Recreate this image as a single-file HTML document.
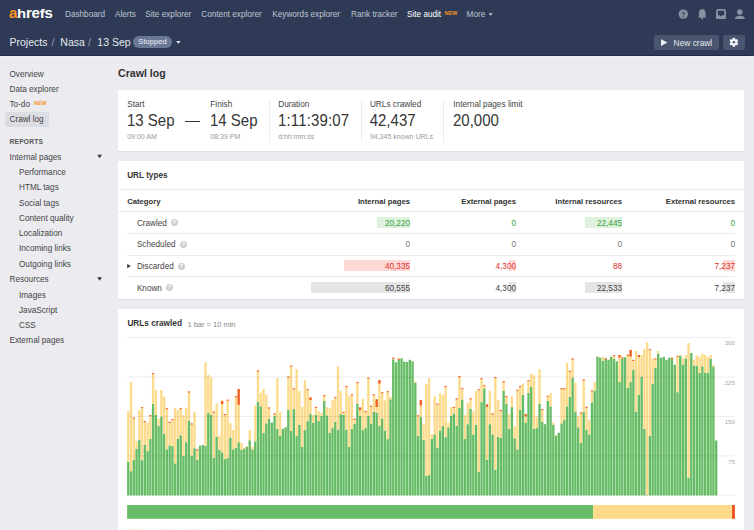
<!DOCTYPE html>
<html><head><meta charset="utf-8">
<style>
*{box-sizing:border-box;margin:0;padding:0}
html,body{width:754px;height:530px;overflow:hidden}
body{background:#ebebf0;font-family:"Liberation Sans",sans-serif;color:#333;position:relative}
.a{position:absolute;white-space:nowrap}
#hdr{position:absolute;left:0;top:0;width:754px;height:56px;background:#2f3b56;border-bottom:1px solid #222c45;box-shadow:0 1px 0 #f1f1f5}
.nav{color:#bfc5d1;font-size:8.2px;top:10px;line-height:10px}
.logo{left:9px;top:4.7px;font-size:15px;font-weight:bold;color:#fff;letter-spacing:-0.25px;line-height:16px}
.logo b{color:#f7941d}
.logo i{font-style:normal;display:inline-block;transform:scaleY(0.9);transform-origin:50% 13px}
.crumb{color:#e6e8ee;font-size:10.5px;top:36px;line-height:12px}
.pill{left:133px;top:36px;width:39px;height:12px;border-radius:6px;background:#6a7896;color:#eef0f5;font-size:7.6px;line-height:12px;text-align:center}
.btn{top:35px;height:15px;background:#4a566f;border-radius:2px}
.side{font-size:8.2px;color:#444;line-height:10px}
.sub{left:19px}
.title{left:118px;top:66.8px;font-size:10.6px;font-weight:bold;color:#333;line-height:12px}
.card{position:absolute;left:118px;width:626px;background:#fff;box-shadow:0 1px 0 #dedee5}
.lbl{font-size:8.25px;color:#444;line-height:10px}
.big{font-size:15px;color:#363636;line-height:16px;transform:scaleY(1.08);transform-origin:0 12.8px}
.sm{font-size:7px;color:#999;line-height:8px}
.vd{position:absolute;width:1px;background:#ececf0;top:10px;height:42px}
.hl{position:absolute;height:1px;background:#ececf0}
.th{font-size:7.7px;font-weight:bold;color:#333;line-height:10px}
.td{font-size:8.2px;color:#444;line-height:10px}
.num{font-size:8.2px;line-height:11px;text-align:right}
.q{position:absolute;width:7px;height:7px;border-radius:50%;background:#cfcfcf;color:#fff;font-size:5.5px;line-height:7px;text-align:center;font-weight:bold}
.g{color:#3aa142}.r{color:#e5322d}.k{color:#777}.d{color:#444}
.bar{position:absolute;height:11px}
</style></head><body>
<div id="hdr">
  <div class="a logo"><b>a</b><i>h</i>re<i>f</i>s</div>
  <div class="a nav" style="left:65px">Dashboard</div>
  <div class="a nav" style="left:115px">Alerts</div>
  <div class="a nav" style="left:145.3px">Site explorer</div>
  <div class="a nav" style="left:201.3px">Content explorer</div>
  <div class="a nav" style="left:272.3px">Keywords explorer</div>
  <div class="a nav" style="left:351px">Rank tracker</div>
  <div class="a nav" style="left:407px;color:#fff">Site audit</div>
  <div class="a" style="left:444.8px;top:9.8px;font-size:5.4px;font-weight:bold;color:#f7931e;line-height:6px">NEW</div>
  <div class="a nav" style="left:466.6px">More</div>
  

  <div class="a crumb" style="left:9.5px">Projects</div>
  <div class="a crumb" style="left:51.5px;color:#9aa2b5">/</div>
  <div class="a crumb" style="left:60.3px">Nasa</div>
  <div class="a crumb" style="left:88px;color:#9aa2b5">/</div>
  <div class="a crumb" style="left:97.3px">13 Sep</div>
  <div class="a pill">Stopped</div>
  

  <div class="a btn" style="left:654px;width:65px"></div>
  <div class="a" style="left:673.6px;top:37.5px;font-size:8.4px;color:#e8eaf0;line-height:10px">New crawl</div>
  <div class="a btn" style="left:723.1px;width:21.5px"></div>
  <svg class="a" style="left:0;top:0" width="754" height="56" viewBox="0 0 754 56">
    <path d="M661 39.2 L667.4 42.6 L661 46 Z" fill="#eef0f4"/>
    <g transform="translate(733.9 42.3)" fill="#f4f5f8">
      <circle r="3.2"/>
      <rect x="-1.25" y="-4.4" width="2.5" height="2.4"/>
      <rect x="-1.25" y="-4.4" width="2.5" height="2.4" transform="rotate(60)"/>
      <rect x="-1.25" y="-4.4" width="2.5" height="2.4" transform="rotate(120)"/>
      <rect x="-1.25" y="-4.4" width="2.5" height="2.4" transform="rotate(180)"/>
      <rect x="-1.25" y="-4.4" width="2.5" height="2.4" transform="rotate(240)"/>
      <rect x="-1.25" y="-4.4" width="2.5" height="2.4" transform="rotate(300)"/>
      <circle r="1.25" fill="#4a566f"/>
    </g>
    <circle cx="683.3" cy="14.1" r="4.7" fill="#8a91a3"/>
    <text x="683.3" y="16.9" font-family="Liberation Sans" font-weight="bold" font-size="7.2" text-anchor="middle" fill="#2e3a55">?</text>
    <path d="M702.2 9.1 C699.7 9.4 698.9 11.4 698.9 13.5 L698.9 16.4 L697.7 17.6 L706.8 17.6 L705.6 16.4 L705.6 13.5 C705.6 11.4 704.8 9.4 702.2 9.1 Z" fill="#8a91a3"/>
    <circle cx="702.2" cy="18.2" r="1.1" fill="#8a91a3"/>
    <rect x="717" y="9.9" width="8.1" height="8.2" rx="1.2" fill="none" stroke="#8a91a3" stroke-width="1.8"/>
    <path d="M716.2 15.2 L719.5 15.2 L720.9 16.5 L721.9 15.2 L725.9 15.2 L725.9 18.9 L716.2 18.9 Z" fill="#8a91a3"/>
    <circle cx="739.8" cy="12" r="2.8" fill="#8a91a3"/>
    <path d="M735 18.9 C735 16.8 737 15.8 739.9 15.8 C742.8 15.8 744.8 16.8 744.8 18.9 Z" fill="#8a91a3"/>
    <path d="M176.2 41 L180.6 41 L178.4 43.8 Z" fill="#e6e8ee"/><path d="M488.5 13.2 L492.9 13.2 L490.7 15.8 Z" fill="#b9bfcc"/>
  </svg>
</div>

<!-- sidebar -->
<div class="a side" style="left:5px;top:112.2px;width:43.6px;height:14.5px;background:#dcdce3;border-radius:2px"></div>
<div class="a side" style="left:9.5px;top:69.7px">Overview</div>
<div class="a side" style="left:9.5px;top:84.7px">Data explorer</div>
<div class="a side" style="left:9.5px;top:99.7px">To-do</div>
<div class="a" style="left:34px;top:99.8px;font-size:5.4px;font-weight:bold;color:#f7931e;line-height:6px">NEW</div>
<div class="a side" style="left:9.5px;top:114.7px">Crawl log</div>
<div class="a" style="left:9.5px;top:137.5px;font-size:6.6px;font-weight:bold;color:#555;letter-spacing:0.25px;line-height:8px">REPORTS</div>
<div class="a side" style="left:9.5px;top:152.7px">Internal pages</div>
<svg class="a" style="left:0;top:0" width="120" height="300"><path d="M97.3 154.8 L101.9 154.8 L99.6 158.2 Z" fill="#333"/><path d="M97.3 277.3 L101.9 277.3 L99.6 280.7 Z" fill="#333"/></svg>
<div class="a side sub" style="top:168.2px">Performance</div>
<div class="a side sub" style="top:183.2px">HTML tags</div>
<div class="a side sub" style="top:198.7px">Social tags</div>
<div class="a side sub" style="top:214.1px">Content quality</div>
<div class="a side sub" style="top:229.2px">Localization</div>
<div class="a side sub" style="top:244.3px">Incoming links</div>
<div class="a side sub" style="top:259.8px">Outgoing links</div>
<div class="a side" style="left:9.5px;top:275.1px">Resources</div>

<div class="a side sub" style="top:290.6px">Images</div>
<div class="a side sub" style="top:305.7px">JavaScript</div>
<div class="a side sub" style="top:320.8px">CSS</div>
<div class="a side" style="left:9.5px;top:336.3px">External pages</div>

<div class="a title">Crawl log</div>

<!-- stats card -->
<div class="card" style="top:90px;height:61px">
  <div class="a lbl" style="left:9.2px;top:9.5px">Start</div>
  <div class="a big" style="left:9px;top:22.5px">13 Sep</div>
  <div class="a sm" style="left:9.2px;top:42.8px">09:00 AM</div>
  <div class="a" style="left:67px;top:30.5px;width:15px;height:1.2px;background:#333"></div>
  <div class="a lbl" style="left:92.3px;top:9.5px">Finish</div>
  <div class="a big" style="left:92px;top:22.5px">14 Sep</div>
  <div class="a sm" style="left:92.3px;top:42.8px">08:39 PM</div>
  <div class="vd" style="left:150.5px"></div>
  <div class="a lbl" style="left:160.2px;top:9.5px">Duration</div>
  <div class="a big" style="left:160px;top:22.5px;letter-spacing:0.15px">1:11:39:07</div>
  <div class="a sm" style="left:160.2px;top:42.8px">d:hh:mm:ss</div>
  <div class="vd" style="left:242.5px"></div>
  <div class="a lbl" style="left:251.9px;top:9.5px">URLs crawled</div>
  <div class="a big" style="left:251.7px;top:22.5px">42,437</div>
  <div class="a sm" style="left:251.9px;top:42.8px">94,345 known URLs</div>
  <div class="vd" style="left:325.2px"></div>
  <div class="a lbl" style="left:335.3px;top:9.5px">Internal pages limit</div>
  <div class="a big" style="left:335px;top:22.5px">20,000</div>
</div>

<!-- URL types card -->
<div class="card" style="top:161px;height:137.5px">
  <div class="a" style="left:9.2px;top:9.5px;font-size:8.2px;font-weight:bold;color:#333;line-height:10px">URL types</div>
  <div class="hl" style="left:0;width:626px;top:28.4px"></div>
  <div class="a th" style="left:9.2px;top:35.6px">Category</div>
  <div class="a th" style="right:334px;top:35.6px">Internal pages</div>
  <div class="a th" style="right:228px;top:35.6px">External pages</div>
  <div class="a th" style="right:122px;top:35.6px">Internal resources</div>
  <div class="a th" style="right:9px;top:35.6px">External resources</div>
  <div class="hl" style="left:0;width:626px;top:50.3px"></div>
  <div class="hl" style="left:9.2px;width:608px;top:71.8px"></div>
  <div class="hl" style="left:9.2px;width:608px;top:94.2px"></div>
  <div class="hl" style="left:9.2px;width:608px;top:115.3px"></div>

  <!-- rows -->
  <div class="a td" style="left:18.9px;top:57.5px">Crawled</div>
  <div class="q" style="left:52.9px;top:58px">?</div>
  <div class="a td" style="left:18.9px;top:79px">Scheduled</div>
  <div class="q" style="left:61.9px;top:79.5px">?</div>
  <svg class="a" style="left:0;top:0" width="30" height="120"><path d="M9.2 103 L12.8 105.1 L9.2 107.2 Z" fill="#333"/></svg>
  <div class="a td" style="left:18.9px;top:101px">Discarded</div>
  <div class="q" style="left:59.7px;top:101.5px">?</div>
  <div class="a td" style="left:18.9px;top:122.6px">Known</div>
  <div class="q" style="left:48px;top:123px">?</div>

  <!-- bars col1 right=292 -->
  <div class="bar" style="left:259px;width:33px;top:55.9px;background:#dff2dd"></div>
  <div class="bar" style="left:226px;width:66px;top:99.3px;background:#fdd8d4"></div>
  <div class="bar" style="left:193px;width:99px;top:121px;background:#e4e4e4"></div>
  <div class="bar" style="left:391px;width:7px;top:99.3px;background:#fdd8d4"></div>
  <div class="bar" style="left:391px;width:7px;top:121px;background:#e4e4e4"></div>
  <div class="bar" style="left:467.3px;width:36.7px;top:55.9px;background:#dff2dd"></div>
  <div class="bar" style="left:467.3px;width:36.7px;top:121px;background:#e4e4e4"></div>
  <div class="bar" style="left:605.2px;width:11.8px;top:99.3px;background:#fdd8d4"></div>
  <div class="bar" style="left:605.2px;width:11.8px;top:121px;background:#e4e4e4"></div>

  <div class="a num g" style="right:334px;top:56.5px">20,220</div>
  <div class="a num g" style="right:228px;top:56.5px">0</div>
  <div class="a num g" style="right:122px;top:56.5px">22,445</div>
  <div class="a num g" style="right:9px;top:56.5px">0</div>
  <div class="a num k" style="right:334px;top:78px">0</div>
  <div class="a num k" style="right:228px;top:78px">0</div>
  <div class="a num k" style="right:122px;top:78px">0</div>
  <div class="a num k" style="right:9px;top:78px">0</div>
  <div class="a num r" style="right:334px;top:100px">40,335</div>
  <div class="a num r" style="right:228px;top:100px">4,300</div>
  <div class="a num r" style="right:122px;top:100px">88</div>
  <div class="a num r" style="right:9px;top:100px">7,237</div>
  <div class="a num d" style="right:334px;top:121.6px">60,555</div>
  <div class="a num d" style="right:228px;top:121.6px">4,300</div>
  <div class="a num d" style="right:122px;top:121.6px">22,533</div>
  <div class="a num d" style="right:9px;top:121.6px">7,237</div>
</div>

<!-- chart card -->
<div class="card" style="top:308.6px;height:240px">
  <div class="a" style="left:9.4px;top:10.9px;font-size:8.25px;font-weight:bold;color:#333;line-height:10px">URLs crawled</div>
  <div class="a" style="left:69.4px;top:11px;font-size:7.5px;color:#888;line-height:10px">1 bar = 10 min</div>
  </div>
<!--CHART--><svg class="a" style="left:0;top:0" width="754" height="530" viewBox="0 0 754 530"><rect x="127.10" y="461.8" width="2.35" height="33.6" fill="#66bc64"/><rect x="127.10" y="411.0" width="2.35" height="50.8" fill="#fddb8c"/><rect x="129.86" y="471.2" width="2.35" height="24.2" fill="#66bc64"/><rect x="129.86" y="382.0" width="2.35" height="89.2" fill="#fddb8c"/><rect x="132.62" y="459.9" width="2.35" height="35.5" fill="#66bc64"/><rect x="132.62" y="417.5" width="2.35" height="42.4" fill="#fddb8c"/><rect x="132.62" y="417.5" width="2.35" height="1.2" fill="#f3734a"/><rect x="135.38" y="448.8" width="2.35" height="46.6" fill="#66bc64"/><rect x="135.38" y="441.0" width="2.35" height="7.8" fill="#fddb8c"/><rect x="138.14" y="439.9" width="2.35" height="55.5" fill="#66bc64"/><rect x="138.14" y="410.0" width="2.35" height="29.9" fill="#fddb8c"/><rect x="140.90" y="460.2" width="2.35" height="35.2" fill="#66bc64"/><rect x="140.90" y="407.0" width="2.35" height="53.2" fill="#fddb8c"/><rect x="140.90" y="407.0" width="2.35" height="1.2" fill="#f3734a"/><rect x="143.66" y="445.0" width="2.35" height="50.4" fill="#66bc64"/><rect x="143.66" y="421.0" width="2.35" height="24.0" fill="#fddb8c"/><rect x="143.66" y="421.0" width="2.35" height="1.2" fill="#f3734a"/><rect x="146.42" y="451.1" width="2.35" height="44.3" fill="#66bc64"/><rect x="146.42" y="422.6" width="2.35" height="28.5" fill="#fddb8c"/><rect x="149.18" y="439.0" width="2.35" height="56.4" fill="#66bc64"/><rect x="149.18" y="415.0" width="2.35" height="24.0" fill="#fddb8c"/><rect x="149.18" y="415.0" width="2.35" height="1.2" fill="#f3734a"/><rect x="151.94" y="404.0" width="2.35" height="91.4" fill="#66bc64"/><rect x="151.94" y="373.0" width="2.35" height="31.0" fill="#fddb8c"/><rect x="151.94" y="373.0" width="2.35" height="1.2" fill="#f3734a"/><rect x="154.70" y="415.0" width="2.35" height="80.4" fill="#66bc64"/><rect x="154.70" y="390.0" width="2.35" height="25.0" fill="#fddb8c"/><rect x="157.46" y="425.8" width="2.35" height="69.6" fill="#66bc64"/><rect x="157.46" y="418.7" width="2.35" height="7.1" fill="#fddb8c"/><rect x="160.22" y="416.4" width="2.35" height="79.0" fill="#66bc64"/><rect x="160.22" y="390.0" width="2.35" height="26.4" fill="#fddb8c"/><rect x="162.98" y="433.6" width="2.35" height="61.8" fill="#66bc64"/><rect x="162.98" y="396.6" width="2.35" height="37.0" fill="#fddb8c"/><rect x="165.74" y="449.3" width="2.35" height="46.1" fill="#66bc64"/><rect x="165.74" y="408.0" width="2.35" height="41.3" fill="#fddb8c"/><rect x="165.74" y="408.0" width="2.35" height="1.2" fill="#f3734a"/><rect x="168.50" y="445.3" width="2.35" height="50.1" fill="#66bc64"/><rect x="168.50" y="421.8" width="2.35" height="23.5" fill="#fddb8c"/><rect x="168.50" y="421.8" width="2.35" height="1.2" fill="#f3734a"/><rect x="171.26" y="446.1" width="2.35" height="49.3" fill="#66bc64"/><rect x="171.26" y="419.0" width="2.35" height="27.1" fill="#fddb8c"/><rect x="171.26" y="419.0" width="2.35" height="1.2" fill="#f3734a"/><rect x="174.02" y="463.4" width="2.35" height="32.0" fill="#66bc64"/><rect x="174.02" y="408.0" width="2.35" height="55.4" fill="#fddb8c"/><rect x="176.78" y="439.0" width="2.35" height="56.4" fill="#66bc64"/><rect x="176.78" y="410.0" width="2.35" height="29.0" fill="#fddb8c"/><rect x="179.54" y="435.2" width="2.35" height="60.2" fill="#66bc64"/><rect x="179.54" y="408.0" width="2.35" height="27.2" fill="#fddb8c"/><rect x="179.54" y="408.0" width="2.35" height="1.2" fill="#f3734a"/><rect x="182.30" y="456.0" width="2.35" height="39.4" fill="#66bc64"/><rect x="182.30" y="415.0" width="2.35" height="41.0" fill="#fddb8c"/><rect x="185.06" y="442.2" width="2.35" height="53.2" fill="#66bc64"/><rect x="185.06" y="408.0" width="2.35" height="34.2" fill="#fddb8c"/><rect x="187.82" y="421.0" width="2.35" height="74.4" fill="#66bc64"/><rect x="187.82" y="391.4" width="2.35" height="29.6" fill="#fddb8c"/><rect x="187.82" y="391.4" width="2.35" height="1.2" fill="#f3734a"/><rect x="190.58" y="455.5" width="2.35" height="39.9" fill="#66bc64"/><rect x="190.58" y="423.4" width="2.35" height="32.1" fill="#fddb8c"/><rect x="190.58" y="423.4" width="2.35" height="1.2" fill="#f3734a"/><rect x="193.34" y="448.2" width="2.35" height="47.2" fill="#66bc64"/><rect x="193.34" y="411.8" width="2.35" height="36.4" fill="#fddb8c"/><rect x="196.10" y="459.9" width="2.35" height="35.5" fill="#66bc64"/><rect x="196.10" y="449.3" width="2.35" height="10.6" fill="#fddb8c"/><rect x="196.10" y="449.3" width="2.35" height="1.2" fill="#f3734a"/><rect x="198.86" y="445.7" width="2.35" height="49.7" fill="#66bc64"/><rect x="201.62" y="445.0" width="2.35" height="50.4" fill="#66bc64"/><rect x="204.38" y="446.0" width="2.35" height="49.4" fill="#66bc64"/><rect x="204.38" y="362.4" width="2.35" height="83.6" fill="#fddb8c"/><rect x="207.14" y="413.0" width="2.35" height="82.4" fill="#66bc64"/><rect x="207.14" y="375.0" width="2.35" height="38.0" fill="#fddb8c"/><rect x="209.90" y="415.0" width="2.35" height="80.4" fill="#66bc64"/><rect x="209.90" y="377.0" width="2.35" height="38.0" fill="#fddb8c"/><rect x="212.66" y="457.9" width="2.35" height="37.5" fill="#66bc64"/><rect x="212.66" y="411.5" width="2.35" height="46.4" fill="#fddb8c"/><rect x="212.66" y="411.5" width="2.35" height="1.2" fill="#f3734a"/><rect x="215.42" y="436.7" width="2.35" height="58.7" fill="#66bc64"/><rect x="215.42" y="403.6" width="2.35" height="33.1" fill="#fddb8c"/><rect x="218.18" y="449.7" width="2.35" height="45.7" fill="#66bc64"/><rect x="218.18" y="435.6" width="2.35" height="14.1" fill="#fddb8c"/><rect x="220.94" y="452.4" width="2.35" height="43.0" fill="#66bc64"/><rect x="220.94" y="400.8" width="2.35" height="51.6" fill="#fddb8c"/><rect x="220.94" y="400.8" width="2.35" height="3.2" fill="#f0602e"/><rect x="223.70" y="459.1" width="2.35" height="36.3" fill="#66bc64"/><rect x="223.70" y="414.0" width="2.35" height="45.1" fill="#fddb8c"/><rect x="223.70" y="414.0" width="2.35" height="1.2" fill="#f3734a"/><rect x="226.46" y="457.9" width="2.35" height="37.5" fill="#66bc64"/><rect x="226.46" y="399.6" width="2.35" height="58.3" fill="#fddb8c"/><rect x="226.46" y="399.6" width="2.35" height="1.2" fill="#f3734a"/><rect x="229.22" y="437.5" width="2.35" height="57.9" fill="#66bc64"/><rect x="229.22" y="423.1" width="2.35" height="14.4" fill="#fddb8c"/><rect x="231.98" y="449.3" width="2.35" height="46.1" fill="#66bc64"/><rect x="231.98" y="430.0" width="2.35" height="19.3" fill="#fddb8c"/><rect x="234.74" y="447.7" width="2.35" height="47.7" fill="#66bc64"/><rect x="234.74" y="396.1" width="2.35" height="51.6" fill="#fddb8c"/><rect x="234.74" y="396.1" width="2.35" height="1.2" fill="#f3734a"/><rect x="237.50" y="442.2" width="2.35" height="53.2" fill="#66bc64"/><rect x="237.50" y="389.0" width="2.35" height="53.2" fill="#fddb8c"/><rect x="237.50" y="389.0" width="2.35" height="15.7" fill="#f0602e"/><rect x="240.26" y="450.0" width="2.35" height="45.4" fill="#66bc64"/><rect x="240.26" y="443.0" width="2.35" height="7.0" fill="#fddb8c"/><rect x="243.02" y="448.5" width="2.35" height="46.9" fill="#66bc64"/><rect x="243.02" y="447.7" width="2.35" height="0.8" fill="#fddb8c"/><rect x="245.78" y="446.9" width="2.35" height="48.5" fill="#66bc64"/><rect x="245.78" y="446.1" width="2.35" height="0.8" fill="#fddb8c"/><rect x="248.54" y="440.3" width="2.35" height="55.1" fill="#66bc64"/><rect x="248.54" y="430.0" width="2.35" height="10.3" fill="#fddb8c"/><rect x="251.30" y="449.3" width="2.35" height="46.1" fill="#66bc64"/><rect x="251.30" y="446.9" width="2.35" height="2.4" fill="#fddb8c"/><rect x="254.06" y="441.4" width="2.35" height="54.0" fill="#66bc64"/><rect x="254.06" y="405.5" width="2.35" height="35.9" fill="#fddb8c"/><rect x="256.82" y="402.0" width="2.35" height="93.4" fill="#66bc64"/><rect x="256.82" y="370.3" width="2.35" height="31.7" fill="#fddb8c"/><rect x="256.82" y="370.3" width="2.35" height="1.2" fill="#f3734a"/><rect x="259.58" y="406.3" width="2.35" height="89.1" fill="#66bc64"/><rect x="259.58" y="392.7" width="2.35" height="13.6" fill="#fddb8c"/><rect x="262.34" y="432.8" width="2.35" height="62.6" fill="#66bc64"/><rect x="262.34" y="389.0" width="2.35" height="43.8" fill="#fddb8c"/><rect x="265.10" y="423.4" width="2.35" height="72.0" fill="#66bc64"/><rect x="265.10" y="394.6" width="2.35" height="28.8" fill="#fddb8c"/><rect x="267.86" y="419.0" width="2.35" height="76.4" fill="#66bc64"/><rect x="267.86" y="407.4" width="2.35" height="11.6" fill="#fddb8c"/><rect x="267.86" y="407.4" width="2.35" height="1.2" fill="#f3734a"/><rect x="270.62" y="422.6" width="2.35" height="72.8" fill="#66bc64"/><rect x="273.38" y="415.9" width="2.35" height="79.5" fill="#66bc64"/><rect x="273.38" y="413.4" width="2.35" height="2.5" fill="#fddb8c"/><rect x="273.38" y="413.4" width="2.35" height="1.2" fill="#f3734a"/><rect x="276.14" y="428.9" width="2.35" height="66.5" fill="#66bc64"/><rect x="276.14" y="378.1" width="2.35" height="50.8" fill="#fddb8c"/><rect x="278.90" y="435.6" width="2.35" height="59.8" fill="#66bc64"/><rect x="278.90" y="411.8" width="2.35" height="23.8" fill="#fddb8c"/><rect x="281.66" y="428.9" width="2.35" height="66.5" fill="#66bc64"/><rect x="284.42" y="427.3" width="2.35" height="68.1" fill="#66bc64"/><rect x="287.18" y="409.9" width="2.35" height="85.5" fill="#66bc64"/><rect x="287.18" y="376.5" width="2.35" height="33.4" fill="#fddb8c"/><rect x="287.18" y="376.5" width="2.35" height="1.2" fill="#f3734a"/><rect x="289.94" y="430.9" width="2.35" height="64.5" fill="#66bc64"/><rect x="289.94" y="365.6" width="2.35" height="65.3" fill="#fddb8c"/><rect x="289.94" y="365.6" width="2.35" height="1.2" fill="#f3734a"/><rect x="292.70" y="409.1" width="2.35" height="86.3" fill="#66bc64"/><rect x="292.70" y="388.3" width="2.35" height="20.8" fill="#fddb8c"/><rect x="292.70" y="388.3" width="2.35" height="1.2" fill="#f3734a"/><rect x="295.46" y="435.9" width="2.35" height="59.5" fill="#66bc64"/><rect x="295.46" y="369.2" width="2.35" height="66.7" fill="#fddb8c"/><rect x="298.22" y="425.0" width="2.35" height="70.4" fill="#66bc64"/><rect x="298.22" y="391.1" width="2.35" height="33.9" fill="#fddb8c"/><rect x="300.98" y="446.9" width="2.35" height="48.5" fill="#66bc64"/><rect x="300.98" y="407.1" width="2.35" height="39.8" fill="#fddb8c"/><rect x="303.74" y="430.1" width="2.35" height="65.3" fill="#66bc64"/><rect x="303.74" y="380.1" width="2.35" height="50.0" fill="#fddb8c"/><rect x="306.50" y="421.1" width="2.35" height="74.3" fill="#66bc64"/><rect x="306.50" y="389.1" width="2.35" height="32.0" fill="#fddb8c"/><rect x="306.50" y="389.1" width="2.35" height="1.2" fill="#f3734a"/><rect x="309.26" y="414.1" width="2.35" height="81.3" fill="#66bc64"/><rect x="309.26" y="397.4" width="2.35" height="16.7" fill="#fddb8c"/><rect x="309.26" y="397.4" width="2.35" height="2.6" fill="#f0602e"/><rect x="312.02" y="422.9" width="2.35" height="72.5" fill="#66bc64"/><rect x="312.02" y="414.9" width="2.35" height="8.0" fill="#fddb8c"/><rect x="314.78" y="414.8" width="2.35" height="80.6" fill="#66bc64"/><rect x="314.78" y="406.8" width="2.35" height="8.0" fill="#fddb8c"/><rect x="314.78" y="406.8" width="2.35" height="1.2" fill="#f3734a"/><rect x="317.54" y="421.1" width="2.35" height="74.3" fill="#66bc64"/><rect x="317.54" y="411.3" width="2.35" height="9.8" fill="#fddb8c"/><rect x="320.30" y="415.9" width="2.35" height="79.5" fill="#66bc64"/><rect x="320.30" y="413.0" width="2.35" height="2.9" fill="#fddb8c"/><rect x="323.06" y="401.1" width="2.35" height="94.3" fill="#66bc64"/><rect x="323.06" y="395.0" width="2.35" height="6.1" fill="#fddb8c"/><rect x="323.06" y="395.0" width="2.35" height="1.2" fill="#f3734a"/><rect x="325.82" y="415.3" width="2.35" height="80.1" fill="#66bc64"/><rect x="325.82" y="407.1" width="2.35" height="8.2" fill="#fddb8c"/><rect x="328.58" y="432.8" width="2.35" height="62.6" fill="#66bc64"/><rect x="328.58" y="408.3" width="2.35" height="24.5" fill="#fddb8c"/><rect x="331.34" y="428.1" width="2.35" height="67.3" fill="#66bc64"/><rect x="331.34" y="400.0" width="2.35" height="28.1" fill="#fddb8c"/><rect x="334.10" y="421.8" width="2.35" height="73.6" fill="#66bc64"/><rect x="334.10" y="396.9" width="2.35" height="24.9" fill="#fddb8c"/><rect x="334.10" y="396.9" width="2.35" height="1.2" fill="#f3734a"/><rect x="336.86" y="429.7" width="2.35" height="65.7" fill="#66bc64"/><rect x="336.86" y="366.3" width="2.35" height="63.4" fill="#fddb8c"/><rect x="339.62" y="414.1" width="2.35" height="81.3" fill="#66bc64"/><rect x="339.62" y="391.1" width="2.35" height="23.0" fill="#fddb8c"/><rect x="342.38" y="414.6" width="2.35" height="80.8" fill="#66bc64"/><rect x="342.38" y="411.8" width="2.35" height="2.8" fill="#fddb8c"/><rect x="342.38" y="411.8" width="2.35" height="1.2" fill="#f3734a"/><rect x="345.14" y="429.7" width="2.35" height="65.7" fill="#66bc64"/><rect x="345.14" y="385.9" width="2.35" height="43.8" fill="#fddb8c"/><rect x="345.14" y="385.9" width="2.35" height="1.2" fill="#f3734a"/><rect x="347.90" y="446.9" width="2.35" height="48.5" fill="#66bc64"/><rect x="347.90" y="396.1" width="2.35" height="50.8" fill="#fddb8c"/><rect x="350.66" y="428.9" width="2.35" height="66.5" fill="#66bc64"/><rect x="350.66" y="394.2" width="2.35" height="34.7" fill="#fddb8c"/><rect x="350.66" y="394.2" width="2.35" height="1.2" fill="#f3734a"/><rect x="353.42" y="423.7" width="2.35" height="71.7" fill="#66bc64"/><rect x="353.42" y="418.7" width="2.35" height="5.0" fill="#fddb8c"/><rect x="353.42" y="418.7" width="2.35" height="1.2" fill="#f3734a"/><rect x="356.18" y="404.0" width="2.35" height="91.4" fill="#66bc64"/><rect x="356.18" y="382.0" width="2.35" height="22.0" fill="#fddb8c"/><rect x="356.18" y="382.0" width="2.35" height="1.2" fill="#f3734a"/><rect x="358.94" y="415.9" width="2.35" height="79.5" fill="#66bc64"/><rect x="358.94" y="407.4" width="2.35" height="8.5" fill="#fddb8c"/><rect x="358.94" y="407.4" width="2.35" height="2.8" fill="#f0602e"/><rect x="361.70" y="430.1" width="2.35" height="65.3" fill="#66bc64"/><rect x="361.70" y="398.9" width="2.35" height="31.2" fill="#fddb8c"/><rect x="364.46" y="427.8" width="2.35" height="67.6" fill="#66bc64"/><rect x="364.46" y="411.0" width="2.35" height="16.8" fill="#fddb8c"/><rect x="364.46" y="411.0" width="2.35" height="1.2" fill="#f3734a"/><rect x="367.22" y="415.6" width="2.35" height="79.8" fill="#66bc64"/><rect x="367.22" y="377.6" width="2.35" height="38.0" fill="#fddb8c"/><rect x="367.22" y="377.6" width="2.35" height="1.2" fill="#f3734a"/><rect x="369.98" y="423.7" width="2.35" height="71.7" fill="#66bc64"/><rect x="369.98" y="405.8" width="2.35" height="17.9" fill="#fddb8c"/><rect x="369.98" y="405.8" width="2.35" height="1.2" fill="#f3734a"/><rect x="372.74" y="411.8" width="2.35" height="83.6" fill="#66bc64"/><rect x="372.74" y="394.2" width="2.35" height="17.6" fill="#fddb8c"/><rect x="372.74" y="394.2" width="2.35" height="1.2" fill="#f3734a"/><rect x="375.50" y="412.6" width="2.35" height="82.8" fill="#66bc64"/><rect x="375.50" y="399.3" width="2.35" height="13.3" fill="#fddb8c"/><rect x="375.50" y="399.3" width="2.35" height="7.7" fill="#f0602e"/><rect x="378.26" y="425.8" width="2.35" height="69.6" fill="#66bc64"/><rect x="378.26" y="380.1" width="2.35" height="45.7" fill="#fddb8c"/><rect x="378.26" y="380.1" width="2.35" height="3.5" fill="#f0602e"/><rect x="381.02" y="418.4" width="2.35" height="77.0" fill="#66bc64"/><rect x="381.02" y="392.2" width="2.35" height="26.2" fill="#fddb8c"/><rect x="381.02" y="392.2" width="2.35" height="1.2" fill="#f3734a"/><rect x="383.78" y="430.5" width="2.35" height="64.9" fill="#66bc64"/><rect x="383.78" y="400.5" width="2.35" height="30.0" fill="#fddb8c"/><rect x="386.54" y="439.1" width="2.35" height="56.3" fill="#66bc64"/><rect x="386.54" y="391.1" width="2.35" height="48.0" fill="#fddb8c"/><rect x="386.54" y="391.1" width="2.35" height="1.2" fill="#f3734a"/><rect x="389.30" y="399.3" width="2.35" height="96.1" fill="#66bc64"/><rect x="389.30" y="396.9" width="2.35" height="2.4" fill="#fddb8c"/><rect x="392.06" y="359.3" width="2.35" height="136.1" fill="#66bc64"/><rect x="392.06" y="357.7" width="2.35" height="1.6" fill="#fddb8c"/><rect x="392.06" y="357.7" width="2.35" height="1.2" fill="#f3734a"/><rect x="394.82" y="362.4" width="2.35" height="133.0" fill="#66bc64"/><rect x="397.58" y="359.3" width="2.35" height="136.1" fill="#66bc64"/><rect x="397.58" y="358.5" width="2.35" height="0.8" fill="#fddb8c"/><rect x="397.58" y="358.5" width="2.35" height="1.2" fill="#f3734a"/><rect x="400.34" y="358.2" width="2.35" height="137.2" fill="#66bc64"/><rect x="403.10" y="361.6" width="2.35" height="133.8" fill="#66bc64"/><rect x="405.86" y="362.0" width="2.35" height="133.4" fill="#66bc64"/><rect x="408.62" y="359.8" width="2.35" height="135.6" fill="#66bc64"/><rect x="411.38" y="361.3" width="2.35" height="134.1" fill="#66bc64"/><rect x="414.14" y="382.8" width="2.35" height="112.6" fill="#66bc64"/><rect x="414.14" y="381.2" width="2.35" height="1.6" fill="#fddb8c"/><rect x="416.90" y="436.0" width="2.35" height="59.4" fill="#66bc64"/><rect x="416.90" y="415.2" width="2.35" height="20.8" fill="#fddb8c"/><rect x="416.90" y="415.2" width="2.35" height="1.2" fill="#f3734a"/><rect x="419.66" y="416.8" width="2.35" height="78.6" fill="#66bc64"/><rect x="419.66" y="400.0" width="2.35" height="16.8" fill="#fddb8c"/><rect x="419.66" y="400.0" width="2.35" height="5.5" fill="#f0602e"/><rect x="422.42" y="439.9" width="2.35" height="55.5" fill="#66bc64"/><rect x="422.42" y="424.2" width="2.35" height="15.7" fill="#fddb8c"/><rect x="425.18" y="475.9" width="2.35" height="19.5" fill="#66bc64"/><rect x="425.18" y="383.9" width="2.35" height="92.0" fill="#fddb8c"/><rect x="427.94" y="475.1" width="2.35" height="20.3" fill="#66bc64"/><rect x="427.94" y="378.1" width="2.35" height="97.0" fill="#fddb8c"/><rect x="430.70" y="438.8" width="2.35" height="56.6" fill="#66bc64"/><rect x="430.70" y="434.4" width="2.35" height="4.4" fill="#fddb8c"/><rect x="433.46" y="434.4" width="2.35" height="61.0" fill="#66bc64"/><rect x="433.46" y="396.1" width="2.35" height="38.3" fill="#fddb8c"/><rect x="436.22" y="447.7" width="2.35" height="47.7" fill="#66bc64"/><rect x="436.22" y="403.6" width="2.35" height="44.1" fill="#fddb8c"/><rect x="436.22" y="403.6" width="2.35" height="1.2" fill="#f3734a"/><rect x="438.98" y="430.5" width="2.35" height="64.9" fill="#66bc64"/><rect x="438.98" y="393.3" width="2.35" height="37.2" fill="#fddb8c"/><rect x="441.74" y="425.8" width="2.35" height="69.6" fill="#66bc64"/><rect x="441.74" y="394.6" width="2.35" height="31.2" fill="#fddb8c"/><rect x="444.50" y="437.2" width="2.35" height="58.2" fill="#66bc64"/><rect x="444.50" y="385.9" width="2.35" height="51.3" fill="#fddb8c"/><rect x="444.50" y="385.9" width="2.35" height="1.2" fill="#f3734a"/><rect x="447.26" y="427.3" width="2.35" height="68.1" fill="#66bc64"/><rect x="447.26" y="422.6" width="2.35" height="4.7" fill="#fddb8c"/><rect x="450.02" y="415.9" width="2.35" height="79.5" fill="#66bc64"/><rect x="450.02" y="407.1" width="2.35" height="8.8" fill="#fddb8c"/><rect x="452.78" y="413.4" width="2.35" height="82.0" fill="#66bc64"/><rect x="452.78" y="406.8" width="2.35" height="6.6" fill="#fddb8c"/><rect x="452.78" y="406.8" width="2.35" height="1.2" fill="#f3734a"/><rect x="455.54" y="425.8" width="2.35" height="69.6" fill="#66bc64"/><rect x="455.54" y="398.2" width="2.35" height="27.6" fill="#fddb8c"/><rect x="455.54" y="398.2" width="2.35" height="1.2" fill="#f3734a"/><rect x="458.30" y="407.9" width="2.35" height="87.5" fill="#66bc64"/><rect x="458.30" y="376.1" width="2.35" height="31.8" fill="#fddb8c"/><rect x="458.30" y="376.1" width="2.35" height="1.2" fill="#f3734a"/><rect x="461.06" y="399.6" width="2.35" height="95.8" fill="#66bc64"/><rect x="461.06" y="388.0" width="2.35" height="11.6" fill="#fddb8c"/><rect x="461.06" y="388.0" width="2.35" height="1.2" fill="#f3734a"/><rect x="463.82" y="438.8" width="2.35" height="56.6" fill="#66bc64"/><rect x="463.82" y="415.2" width="2.35" height="23.6" fill="#fddb8c"/><rect x="466.58" y="424.2" width="2.35" height="71.2" fill="#66bc64"/><rect x="466.58" y="403.2" width="2.35" height="21.0" fill="#fddb8c"/><rect x="469.34" y="408.7" width="2.35" height="86.7" fill="#66bc64"/><rect x="469.34" y="398.2" width="2.35" height="10.5" fill="#fddb8c"/><rect x="469.34" y="398.2" width="2.35" height="1.2" fill="#f3734a"/><rect x="472.10" y="434.4" width="2.35" height="61.0" fill="#66bc64"/><rect x="472.10" y="411.3" width="2.35" height="23.1" fill="#fddb8c"/><rect x="474.86" y="425.0" width="2.35" height="70.4" fill="#66bc64"/><rect x="474.86" y="391.1" width="2.35" height="33.9" fill="#fddb8c"/><rect x="477.62" y="472.0" width="2.35" height="23.4" fill="#66bc64"/><rect x="477.62" y="389.1" width="2.35" height="82.9" fill="#fddb8c"/><rect x="477.62" y="389.1" width="2.35" height="1.2" fill="#f3734a"/><rect x="480.38" y="402.1" width="2.35" height="93.3" fill="#66bc64"/><rect x="480.38" y="378.1" width="2.35" height="24.0" fill="#fddb8c"/><rect x="480.38" y="378.1" width="2.35" height="1.2" fill="#f3734a"/><rect x="483.14" y="388.3" width="2.35" height="107.1" fill="#66bc64"/><rect x="483.14" y="385.1" width="2.35" height="3.2" fill="#fddb8c"/><rect x="483.14" y="385.1" width="2.35" height="1.2" fill="#f3734a"/><rect x="485.90" y="459.8" width="2.35" height="35.6" fill="#66bc64"/><rect x="485.90" y="404.4" width="2.35" height="55.4" fill="#fddb8c"/><rect x="485.90" y="404.4" width="2.35" height="2.4" fill="#f0602e"/><rect x="488.66" y="424.2" width="2.35" height="71.2" fill="#66bc64"/><rect x="488.66" y="390.6" width="2.35" height="33.6" fill="#fddb8c"/><rect x="491.42" y="434.4" width="2.35" height="61.0" fill="#66bc64"/><rect x="491.42" y="413.4" width="2.35" height="21.0" fill="#fddb8c"/><rect x="491.42" y="413.4" width="2.35" height="1.2" fill="#f3734a"/><rect x="494.18" y="469.6" width="2.35" height="25.8" fill="#66bc64"/><rect x="494.18" y="377.0" width="2.35" height="92.6" fill="#fddb8c"/><rect x="494.18" y="377.0" width="2.35" height="1.2" fill="#f3734a"/><rect x="496.94" y="436.7" width="2.35" height="58.7" fill="#66bc64"/><rect x="496.94" y="400.0" width="2.35" height="36.7" fill="#fddb8c"/><rect x="499.70" y="437.8" width="2.35" height="57.6" fill="#66bc64"/><rect x="499.70" y="409.9" width="2.35" height="27.9" fill="#fddb8c"/><rect x="499.70" y="409.9" width="2.35" height="1.2" fill="#f3734a"/><rect x="502.46" y="390.6" width="2.35" height="104.8" fill="#66bc64"/><rect x="502.46" y="381.2" width="2.35" height="9.4" fill="#fddb8c"/><rect x="502.46" y="381.2" width="2.35" height="1.2" fill="#f3734a"/><rect x="505.22" y="404.0" width="2.35" height="91.4" fill="#66bc64"/><rect x="505.22" y="396.1" width="2.35" height="7.9" fill="#fddb8c"/><rect x="505.22" y="396.1" width="2.35" height="1.2" fill="#f3734a"/><rect x="507.98" y="428.9" width="2.35" height="66.5" fill="#66bc64"/><rect x="507.98" y="414.1" width="2.35" height="14.8" fill="#fddb8c"/><rect x="510.74" y="407.1" width="2.35" height="88.3" fill="#66bc64"/><rect x="510.74" y="396.4" width="2.35" height="10.7" fill="#fddb8c"/><rect x="513.50" y="438.3" width="2.35" height="57.1" fill="#66bc64"/><rect x="513.50" y="426.5" width="2.35" height="11.8" fill="#fddb8c"/><rect x="516.26" y="449.3" width="2.35" height="46.1" fill="#66bc64"/><rect x="516.26" y="389.9" width="2.35" height="59.4" fill="#fddb8c"/><rect x="516.26" y="389.9" width="2.35" height="1.2" fill="#f3734a"/><rect x="519.02" y="409.9" width="2.35" height="85.5" fill="#66bc64"/><rect x="519.02" y="385.9" width="2.35" height="24.0" fill="#fddb8c"/><rect x="519.02" y="385.9" width="2.35" height="1.2" fill="#f3734a"/><rect x="521.78" y="394.6" width="2.35" height="100.8" fill="#66bc64"/><rect x="521.78" y="383.9" width="2.35" height="10.7" fill="#fddb8c"/><rect x="524.54" y="422.6" width="2.35" height="72.8" fill="#66bc64"/><rect x="524.54" y="414.1" width="2.35" height="8.5" fill="#fddb8c"/><rect x="524.54" y="414.1" width="2.35" height="2.3" fill="#f0602e"/><rect x="527.30" y="393.0" width="2.35" height="102.4" fill="#66bc64"/><rect x="527.30" y="380.1" width="2.35" height="12.9" fill="#fddb8c"/><rect x="527.30" y="380.1" width="2.35" height="1.2" fill="#f3734a"/><rect x="530.06" y="386.7" width="2.35" height="108.7" fill="#66bc64"/><rect x="530.06" y="373.9" width="2.35" height="12.8" fill="#fddb8c"/><rect x="532.82" y="428.9" width="2.35" height="66.5" fill="#66bc64"/><rect x="532.82" y="375.0" width="2.35" height="53.9" fill="#fddb8c"/><rect x="535.58" y="428.1" width="2.35" height="67.3" fill="#66bc64"/><rect x="535.58" y="416.5" width="2.35" height="11.6" fill="#fddb8c"/><rect x="538.34" y="404.0" width="2.35" height="91.4" fill="#66bc64"/><rect x="538.34" y="369.2" width="2.35" height="34.8" fill="#fddb8c"/><rect x="541.10" y="421.8" width="2.35" height="73.6" fill="#66bc64"/><rect x="541.10" y="409.0" width="2.35" height="12.8" fill="#fddb8c"/><rect x="541.10" y="409.0" width="2.35" height="1.2" fill="#f3734a"/><rect x="543.86" y="424.2" width="2.35" height="71.2" fill="#66bc64"/><rect x="546.62" y="400.8" width="2.35" height="94.6" fill="#66bc64"/><rect x="546.62" y="395.8" width="2.35" height="5.0" fill="#fddb8c"/><rect x="546.62" y="395.8" width="2.35" height="1.2" fill="#f3734a"/><rect x="549.38" y="406.3" width="2.35" height="89.1" fill="#66bc64"/><rect x="549.38" y="393.0" width="2.35" height="13.3" fill="#fddb8c"/><rect x="552.14" y="424.7" width="2.35" height="70.7" fill="#66bc64"/><rect x="552.14" y="422.6" width="2.35" height="2.1" fill="#fddb8c"/><rect x="554.90" y="436.0" width="2.35" height="59.4" fill="#66bc64"/><rect x="554.90" y="435.0" width="2.35" height="1.0" fill="#fddb8c"/><rect x="557.66" y="432.8" width="2.35" height="62.6" fill="#66bc64"/><rect x="560.42" y="423.4" width="2.35" height="72.0" fill="#66bc64"/><rect x="560.42" y="388.3" width="2.35" height="35.1" fill="#fddb8c"/><rect x="560.42" y="388.3" width="2.35" height="1.2" fill="#f3734a"/><rect x="563.18" y="420.0" width="2.35" height="75.4" fill="#66bc64"/><rect x="563.18" y="388.0" width="2.35" height="32.0" fill="#fddb8c"/><rect x="563.18" y="388.0" width="2.35" height="1.2" fill="#f3734a"/><rect x="565.94" y="406.3" width="2.35" height="89.1" fill="#66bc64"/><rect x="565.94" y="362.9" width="2.35" height="43.4" fill="#fddb8c"/><rect x="568.70" y="396.9" width="2.35" height="98.5" fill="#66bc64"/><rect x="568.70" y="370.7" width="2.35" height="26.2" fill="#fddb8c"/><rect x="568.70" y="370.7" width="2.35" height="1.2" fill="#f3734a"/><rect x="571.46" y="377.6" width="2.35" height="117.8" fill="#66bc64"/><rect x="571.46" y="358.5" width="2.35" height="19.1" fill="#fddb8c"/><rect x="571.46" y="358.5" width="2.35" height="1.2" fill="#f3734a"/><rect x="574.22" y="411.5" width="2.35" height="83.9" fill="#66bc64"/><rect x="574.22" y="382.8" width="2.35" height="28.7" fill="#fddb8c"/><rect x="576.98" y="427.3" width="2.35" height="68.1" fill="#66bc64"/><rect x="576.98" y="416.2" width="2.35" height="11.1" fill="#fddb8c"/><rect x="579.74" y="443.0" width="2.35" height="52.4" fill="#66bc64"/><rect x="579.74" y="412.3" width="2.35" height="30.7" fill="#fddb8c"/><rect x="579.74" y="412.3" width="2.35" height="1.2" fill="#f3734a"/><rect x="582.50" y="412.1" width="2.35" height="83.3" fill="#66bc64"/><rect x="582.50" y="379.4" width="2.35" height="32.7" fill="#fddb8c"/><rect x="582.50" y="379.4" width="2.35" height="1.2" fill="#f3734a"/><rect x="585.26" y="429.7" width="2.35" height="65.7" fill="#66bc64"/><rect x="585.26" y="406.8" width="2.35" height="22.9" fill="#fddb8c"/><rect x="585.26" y="406.8" width="2.35" height="1.2" fill="#f3734a"/><rect x="588.02" y="434.4" width="2.35" height="61.0" fill="#66bc64"/><rect x="588.02" y="420.0" width="2.35" height="14.4" fill="#fddb8c"/><rect x="590.78" y="402.4" width="2.35" height="93.0" fill="#66bc64"/><rect x="590.78" y="390.2" width="2.35" height="12.2" fill="#fddb8c"/><rect x="590.78" y="390.2" width="2.35" height="1.2" fill="#f3734a"/><rect x="593.54" y="390.6" width="2.35" height="104.8" fill="#66bc64"/><rect x="593.54" y="382.0" width="2.35" height="8.6" fill="#fddb8c"/><rect x="596.30" y="356.6" width="2.35" height="138.8" fill="#66bc64"/><rect x="599.06" y="357.7" width="2.35" height="137.7" fill="#66bc64"/><rect x="601.82" y="360.9" width="2.35" height="134.5" fill="#66bc64"/><rect x="601.82" y="356.9" width="2.35" height="4.0" fill="#fddb8c"/><rect x="604.58" y="358.5" width="2.35" height="136.9" fill="#66bc64"/><rect x="604.58" y="358.2" width="2.35" height="0.3" fill="#fddb8c"/><rect x="604.58" y="358.2" width="2.35" height="1.2" fill="#f3734a"/><rect x="607.34" y="359.8" width="2.35" height="135.6" fill="#66bc64"/><rect x="607.34" y="359.3" width="2.35" height="0.5" fill="#fddb8c"/><rect x="610.10" y="356.6" width="2.35" height="138.8" fill="#66bc64"/><rect x="612.86" y="358.8" width="2.35" height="136.6" fill="#66bc64"/><rect x="612.86" y="355.0" width="2.35" height="3.8" fill="#fddb8c"/><rect x="612.86" y="355.0" width="2.35" height="1.2" fill="#f3734a"/><rect x="615.62" y="361.3" width="2.35" height="134.1" fill="#66bc64"/><rect x="618.38" y="382.0" width="2.35" height="113.4" fill="#66bc64"/><rect x="618.38" y="355.0" width="2.35" height="27.0" fill="#fddb8c"/><rect x="618.38" y="355.0" width="2.35" height="2.5" fill="#f0602e"/><rect x="621.14" y="358.5" width="2.35" height="136.9" fill="#66bc64"/><rect x="621.14" y="357.3" width="2.35" height="1.2" fill="#fddb8c"/><rect x="621.14" y="357.3" width="2.35" height="1.2" fill="#f3734a"/><rect x="623.90" y="357.3" width="2.35" height="138.1" fill="#66bc64"/><rect x="626.66" y="388.0" width="2.35" height="107.4" fill="#66bc64"/><rect x="626.66" y="354.6" width="2.35" height="33.4" fill="#fddb8c"/><rect x="626.66" y="354.6" width="2.35" height="1.2" fill="#f3734a"/><rect x="629.42" y="382.0" width="2.35" height="113.4" fill="#66bc64"/><rect x="629.42" y="349.9" width="2.35" height="32.1" fill="#fddb8c"/><rect x="629.42" y="349.9" width="2.35" height="6.7" fill="#f0602e"/><rect x="632.18" y="369.5" width="2.35" height="125.9" fill="#66bc64"/><rect x="632.18" y="359.8" width="2.35" height="9.7" fill="#fddb8c"/><rect x="632.18" y="359.8" width="2.35" height="1.2" fill="#f3734a"/><rect x="634.94" y="411.8" width="2.35" height="83.6" fill="#66bc64"/><rect x="634.94" y="351.0" width="2.35" height="60.8" fill="#fddb8c"/><rect x="637.70" y="394.6" width="2.35" height="100.8" fill="#66bc64"/><rect x="637.70" y="355.0" width="2.35" height="39.6" fill="#fddb8c"/><rect x="637.70" y="355.0" width="2.35" height="2.0" fill="#f0602e"/><rect x="640.46" y="376.5" width="2.35" height="118.9" fill="#66bc64"/><rect x="640.46" y="355.0" width="2.35" height="21.5" fill="#fddb8c"/><rect x="643.22" y="428.9" width="2.35" height="66.5" fill="#66bc64"/><rect x="643.22" y="348.8" width="2.35" height="80.1" fill="#fddb8c"/><rect x="645.98" y="494.7" width="2.35" height="0.7" fill="#66bc64"/><rect x="645.98" y="342.1" width="2.35" height="152.6" fill="#fddb8c"/><rect x="648.74" y="435.9" width="2.35" height="59.5" fill="#66bc64"/><rect x="648.74" y="349.1" width="2.35" height="86.8" fill="#fddb8c"/><rect x="648.74" y="349.1" width="2.35" height="1.2" fill="#f3734a"/><rect x="651.50" y="383.9" width="2.35" height="111.5" fill="#66bc64"/><rect x="651.50" y="358.2" width="2.35" height="25.7" fill="#fddb8c"/><rect x="654.26" y="367.6" width="2.35" height="127.8" fill="#66bc64"/><rect x="654.26" y="358.5" width="2.35" height="9.1" fill="#fddb8c"/><rect x="654.26" y="358.5" width="2.35" height="1.2" fill="#f3734a"/><rect x="657.02" y="353.5" width="2.35" height="141.9" fill="#66bc64"/><rect x="657.02" y="351.0" width="2.35" height="2.5" fill="#fddb8c"/><rect x="659.78" y="357.7" width="2.35" height="137.7" fill="#66bc64"/><rect x="662.54" y="356.9" width="2.35" height="138.5" fill="#66bc64"/><rect x="665.30" y="359.8" width="2.35" height="135.6" fill="#66bc64"/><rect x="668.06" y="357.7" width="2.35" height="137.7" fill="#66bc64"/><rect x="670.82" y="358.2" width="2.35" height="137.2" fill="#66bc64"/><rect x="670.82" y="357.7" width="2.35" height="0.5" fill="#fddb8c"/><rect x="670.82" y="357.7" width="2.35" height="1.2" fill="#f3734a"/><rect x="673.58" y="364.8" width="2.35" height="130.6" fill="#66bc64"/><rect x="676.34" y="392.2" width="2.35" height="103.2" fill="#66bc64"/><rect x="676.34" y="355.8" width="2.35" height="36.4" fill="#fddb8c"/><rect x="676.34" y="355.8" width="2.35" height="1.2" fill="#f3734a"/><rect x="679.10" y="355.7" width="2.35" height="139.7" fill="#66bc64"/><rect x="679.10" y="354.6" width="2.35" height="1.1" fill="#fddb8c"/><rect x="681.86" y="364.5" width="2.35" height="130.9" fill="#66bc64"/><rect x="681.86" y="358.2" width="2.35" height="6.3" fill="#fddb8c"/><rect x="684.62" y="358.5" width="2.35" height="136.9" fill="#66bc64"/><rect x="684.62" y="355.0" width="2.35" height="3.5" fill="#fddb8c"/><rect x="687.38" y="477.5" width="2.35" height="17.9" fill="#66bc64"/><rect x="687.38" y="343.1" width="2.35" height="134.4" fill="#fddb8c"/><rect x="690.14" y="353.0" width="2.35" height="142.4" fill="#66bc64"/><rect x="692.90" y="365.6" width="2.35" height="129.8" fill="#66bc64"/><rect x="692.90" y="359.8" width="2.35" height="5.8" fill="#fddb8c"/><rect x="695.66" y="365.6" width="2.35" height="129.8" fill="#66bc64"/><rect x="695.66" y="355.4" width="2.35" height="10.2" fill="#fddb8c"/><rect x="698.42" y="372.9" width="2.35" height="122.5" fill="#66bc64"/><rect x="698.42" y="356.9" width="2.35" height="16.0" fill="#fddb8c"/><rect x="701.18" y="366.3" width="2.35" height="129.1" fill="#66bc64"/><rect x="701.18" y="353.5" width="2.35" height="12.8" fill="#fddb8c"/><rect x="703.94" y="372.6" width="2.35" height="122.8" fill="#66bc64"/><rect x="703.94" y="355.0" width="2.35" height="17.6" fill="#fddb8c"/><rect x="706.70" y="372.9" width="2.35" height="122.5" fill="#66bc64"/><rect x="706.70" y="356.9" width="2.35" height="16.0" fill="#fddb8c"/><rect x="709.46" y="358.8" width="2.35" height="136.6" fill="#66bc64"/><rect x="709.46" y="355.0" width="2.35" height="3.8" fill="#fddb8c"/><rect x="712.22" y="366.6" width="2.35" height="128.8" fill="#66bc64"/><rect x="712.22" y="365.1" width="2.35" height="1.5" fill="#fddb8c"/><rect x="714.98" y="440.5" width="2.35" height="54.9" fill="#66bc64"/><rect x="127.4" y="336.9" width="607.6" height="1" fill="rgba(0,0,0,0.07)"/><rect x="127.4" y="376.5" width="607.6" height="1" fill="rgba(0,0,0,0.07)"/><rect x="127.4" y="416.0" width="607.6" height="1" fill="rgba(0,0,0,0.07)"/><rect x="127.4" y="455.4" width="607.6" height="1" fill="rgba(0,0,0,0.07)"/><rect x="127.4" y="494.7" width="607.6" height="1" fill="rgba(0,0,0,0.07)"/><rect x="127.1" y="505" width="466" height="13.8" fill="#6abd68"/><rect x="593.1" y="505" width="139" height="13.8" fill="#fddb8a"/><rect x="732" y="505" width="3" height="13.8" fill="#ef5a2a"/></svg><div class="a" style="right:19px;top:339.3px;font-size:6.2px;color:#a8a8a8;line-height:7px">300</div><div class="a" style="right:19px;top:378.9px;font-size:6.2px;color:#a8a8a8;line-height:7px">225</div><div class="a" style="right:19px;top:418.4px;font-size:6.2px;color:#a8a8a8;line-height:7px">150</div><div class="a" style="right:19px;top:457.8px;font-size:6.2px;color:#a8a8a8;line-height:7px">75</div><!--/CHART-->
<svg class="a" style="left:0;top:528px" width="754" height="2"><rect x="127.4" y="1.2" width="15.6" height="0.8" fill="rgba(120,180,110,0.12)"/><rect x="158" y="1.2" width="17" height="0.8" fill="rgba(120,120,120,0.08)"/><rect x="187" y="1.2" width="16" height="0.8" fill="rgba(120,120,120,0.08)"/><rect x="219" y="1.2" width="19" height="0.8" fill="rgba(120,120,120,0.08)"/><rect x="253" y="1.2" width="7" height="0.8" fill="rgba(120,120,120,0.08)"/></svg>
</body></html>
